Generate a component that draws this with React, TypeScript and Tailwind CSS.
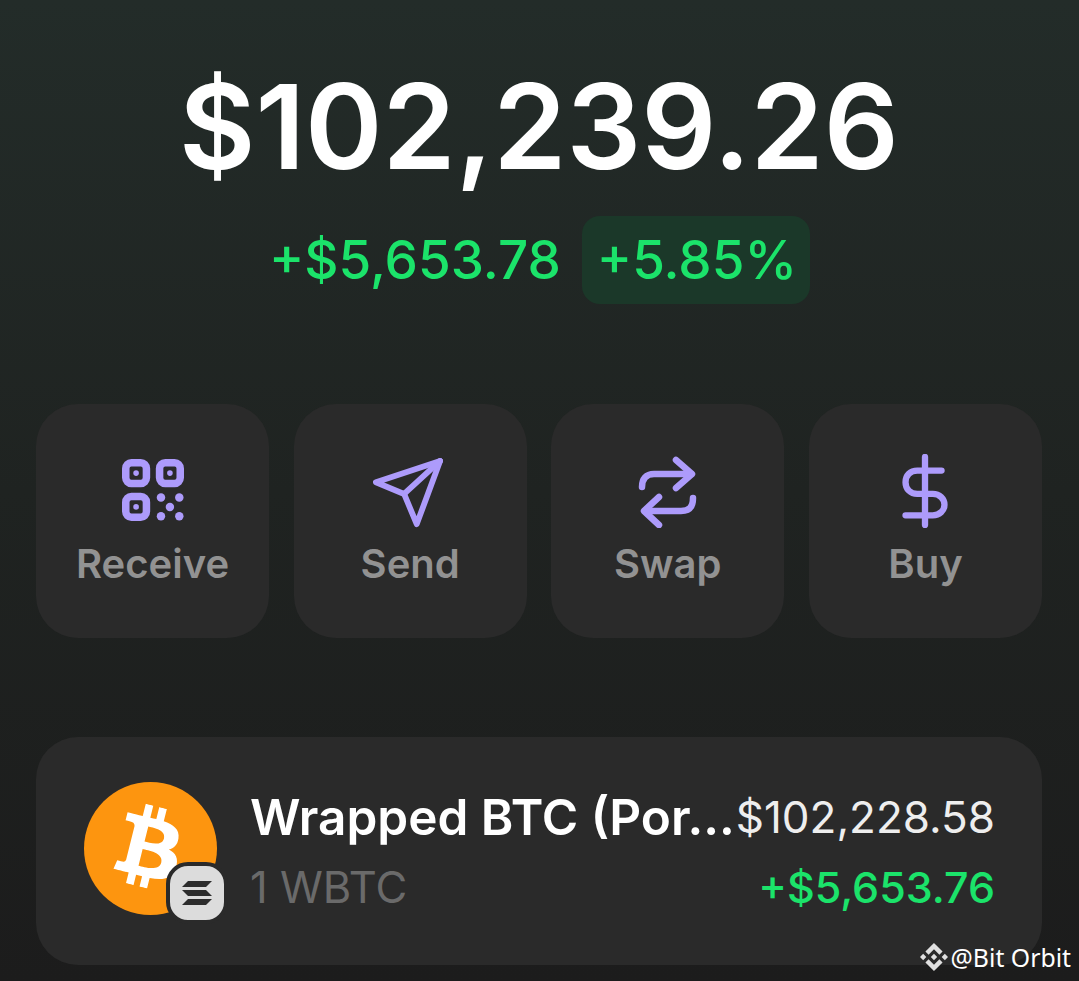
import { FaBtc } from 'react-icons/fa';
import { SiBinance } from 'react-icons/si';

const QrIcon = () => (
  <svg className="mb-[7px]" width="62" height="62" viewBox="0 0 66 66" fill="none" stroke="#ad9bfb" strokeWidth="8">
    <rect x="4" y="4" width="22" height="22" rx="6" />
    <rect x="40" y="4" width="22" height="22" rx="6" />
    <rect x="4" y="40" width="22" height="22" rx="6" />
    <g fill="#ad9bfb" stroke="none">
      <circle cx="15" cy="15" r="3" />
      <circle cx="51" cy="15" r="3" />
      <circle cx="15" cy="51" r="3" />
      <circle cx="41.5" cy="41" r="4.5" />
      <circle cx="61" cy="41" r="4.5" />
      <circle cx="51" cy="51" r="4.5" />
      <circle cx="41.5" cy="61" r="4.5" />
      <circle cx="61" cy="61" r="4.5" />
    </g>
  </svg>
);

const SendIcon = () => (
  <svg className="mr-[4px]" width="70" height="70" viewBox="0 0 72 72" fill="none" stroke="#ad9bfb" strokeWidth="6" strokeLinejoin="round" strokeLinecap="round">
    <path d="M69 3 3 25l29 12 13 31z" />
    <path d="M69 3 32 37" />
  </svg>
);

const SwapIcon = () => (
  <svg width="60" height="72" viewBox="0 0 60 72" fill="none" stroke="#ad9bfb" strokeWidth="6.5" strokeLinejoin="round" strokeLinecap="round">
    <path d="M4 31c0-8 4-13 12-13h37" />
    <path d="M38 4l16 14-16 14" />
    <path d="M55 42c0 9-4 13-12 13H7" />
    <path d="M21 41 6 55l15 14" />
  </svg>
);

const DollarIcon = () => (
  <svg width="46" height="74" viewBox="0 0 46 76" fill="none" stroke="#ad9bfb" strokeWidth="6.5" strokeLinecap="round">
    <path d="M23 3v70" />
    <path d="M40 17H15C8 17 3 22 3 29s5 12 12 12h16c7 0 12 5 12 11s-5 11-12 11H3" />
  </svg>
);

const SolanaMark = () => (
  <svg width="30" height="26" viewBox="0 0 30 26" fill="#2c2c2c">
    <path d="M6 1h24l-6 6H0z" />
    <path d="M0 10h24l6 6H6z" />
    <path d="M6 19h24l-6 6H0z" />
  </svg>
);

const actions = [
  { label: 'Receive', icon: <QrIcon /> },
  { label: 'Send', icon: <SendIcon /> },
  { label: 'Swap', icon: <SwapIcon /> },
  { label: 'Buy', icon: <DollarIcon /> },
];

export default function App() {
  return (
    <div className="relative h-[981px] w-[1079px] overflow-hidden bg-gradient-to-b from-[#232c29] via-[#1f2321] to-[#1c1c1c] pl-[36px] pr-[37px] font-['Inter',sans-serif]">
      {/* Balance */}
      <div className="pt-[60px] text-center text-[117.5px] font-semibold leading-[132px] text-white">
        $102,239.26
      </div>

      {/* Day change */}
      <div className="mt-[24px] flex items-center justify-center gap-[21px] pl-[1px] text-[53px] font-medium leading-none text-[#1be36a]">
        <span>+$5,653.78</span>
        <span className="flex h-[88px] items-center rounded-[18px] bg-[#1b3829] pl-[15px] pr-[13px]">+5.85%</span>
      </div>

      {/* Actions */}
      <div className="mt-[100px] grid grid-cols-4 gap-[24.6px]">
        {actions.map((a) => (
          <div key={a.label} className="flex h-[234px] flex-col items-center rounded-[42px] bg-[#2a2a2a]">
            <div className="flex h-[137px] items-end justify-center pb-[13px]">{a.icon}</div>
            <span className="text-[40px] font-semibold leading-[46px] text-[#929292]">{a.label}</span>
          </div>
        ))}
      </div>

      {/* Token row */}
      <div className="mt-[99px] flex h-[228px] items-center rounded-[42px] bg-[#2a2a2a] pl-[48px] pr-[47px]">
        <div className="relative mb-[6px] h-[133px] w-[133px] shrink-0 rounded-full bg-[#fd950f]">
          <FaBtc className="absolute left-[33px] top-[24px] h-[82px] w-[66px] rotate-[14deg] text-white" />
          <div className="absolute -bottom-[9px] -right-[11px] flex h-[62px] w-[62px] items-center justify-center rounded-[22px] border-[4px] border-[#2a2a2a] bg-[#dcdcdc]">
            <SolanaMark />
          </div>
        </div>
        <div className="ml-[33px] flex min-w-0 flex-1 flex-col gap-[24px] pt-[2px]">
          <span className="whitespace-nowrap text-[49.5px] font-semibold leading-[46px] text-white">Wrapped BTC (Por...</span>
          <span className="text-[43.5px] leading-[46px] text-[#6a6a6a]">1 WBTC</span>
        </div>
        <div className="flex flex-col items-end gap-[24px] pt-[2px]">
          <span className="text-[44px] leading-[46px] text-[#eeeeee]">$102,228.58</span>
          <span className="text-[43px] font-medium leading-[46px] text-[#1be36a]">+$5,653.76</span>
        </div>
      </div>

      {/* Watermark */}
      <div className="absolute bottom-[6px] right-[8px] flex items-center gap-[3px] font-['Noto_Sans',sans-serif] text-[24.8px] leading-[36px] text-white">
        <SiBinance className="h-[28px] w-[28px] text-[#e0e0e0]" />
        <span>@Bit Orbit</span>
      </div>
    </div>
  );
}
